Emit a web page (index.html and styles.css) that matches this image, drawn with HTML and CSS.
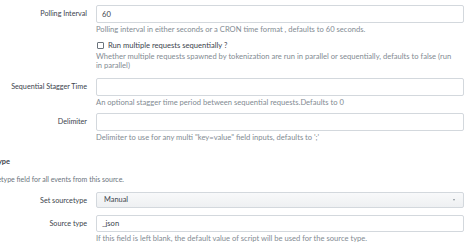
FILE: index.html
```
<!DOCTYPE html>
<html>
<head>
<meta charset="utf-8">
<link rel="stylesheet" href="styles.css">
</head>
<body>
<div class="form">
  <div class="row r-poll">
    <div class="label">Polling Interval</div>
    <div class="ctrl">
      <div class="input">60</div>
      <div class="help">Polling interval in either seconds or a CRON time format , defaults to 60 seconds.</div>
    </div>
  </div>
  <div class="row r-check">
    <div class="label"></div>
    <div class="ctrl">
      <div class="check"><span class="box"></span><span class="check-label">Run multiple requests sequentially ?</span></div>
      <div class="help wrap">Whether multiple requests spawned by tokenization are run in parallel or sequentially, defaults to false (run<br>in parallel)</div>
    </div>
  </div>
  <div class="row r-seq">
    <div class="label">Sequential Stagger Time</div>
    <div class="ctrl">
      <div class="input"></div>
      <div class="help">An optional stagger time period between sequential requests.Defaults to 0</div>
    </div>
  </div>
  <div class="row r-delim">
    <div class="label">Delimiter</div>
    <div class="ctrl">
      <div class="input"></div>
      <div class="help">Delimiter to use for any multi "key=value" field inputs, defaults to ';'</div>
    </div>
  </div>
  <div class="section">
    <div class="section-title"><span>Source type</span></div>
    <div class="section-desc"><span>Set sourcetype field for all events from this source.</span></div>
  </div>
  <div class="row r-set">
    <div class="label">Set sourcetype</div>
    <div class="ctrl">
      <div class="select"><span>Manual</span><span class="caret"></span></div>
    </div>
  </div>
  <div class="row r-st">
    <div class="label">Source type</div>
    <div class="ctrl">
      <div class="input">_json</div>
      <div class="help">If this field is left blank, the default value of script will be used for the source type.</div>
    </div>
  </div>
</div>
</body>
</html>
```
FILE: styles.css
```
html, body {
  margin: 0;
  padding: 0;
  background: #ffffff;
}
body {
  font-family: Lato, "Open Sans", sans-serif;
  font-size: 7px;
  color: #3c444d;
  width: 474px;
  height: 248px;
  overflow: hidden;
}
.form {
  padding-top: 5px;
  display: flex;
  flex-direction: column;
}
.row {
  display: grid;
  grid-template-columns: 87px 368px;
  column-gap: 9px;
  align-items: start;
}
.label {
  text-align: right;
  font-size: 7.2px;
  line-height: 18px;
  color: #3c444d;
  white-space: nowrap;
}
.ctrl {
  display: flex;
  flex-direction: column;
}
.input {
  box-sizing: border-box;
  height: 18px;
  border: 1px solid #d3d8dd;
  border-radius: 2px;
  background: #fff;
  padding: 0 5px;
  line-height: 16px;
  font-size: 7.6px;
  color: #3c444d;
}
.help {
  font-size: 7.6px;
  line-height: 10px;
  color: #838b93;
  margin-top: 1px;
  white-space: nowrap;
}
.help.wrap {
  line-height: 9.5px;
  margin-top: 1.5px;
}
.r-check {
  margin-top: 6px;
}
.check {
  display: flex;
  align-items: center;
  gap: 4px;
  height: 10px;
}
.box {
  box-sizing: border-box;
  width: 7px;
  height: 7px;
  border: 1px solid #6b747d;
  border-radius: 1px;
  background: #fff;
  margin-left: 1px;
}
.check-label {
  font-size: 7.6px;
  color: #3c444d;
}
.r-seq {
  margin-top: 7px;
}
.r-delim {
  margin-top: 6px;
}
.section {
  margin-top: 15px;
  display: flex;
  flex-direction: column;
}
.section-title {
  display: flex;
  justify-content: flex-end;
  width: 10px;
  font-weight: bold;
  font-size: 7.4px;
  line-height: 10px;
  color: #3c444d;
  white-space: nowrap;
}
.section-desc {
  display: flex;
  justify-content: flex-end;
  width: 124px;
  margin-top: 7px;
  font-size: 7px;
  line-height: 10px;
  color: #6b747d;
  white-space: nowrap;
}
.r-set {
  margin-top: 8px;
}
.select {
  box-sizing: border-box;
  height: 16px;
  border: 1px solid #d3d8dd;
  border-radius: 2px;
  background: linear-gradient(#f8f9fa, #eef0f2);
  padding: 0 6px 0 7px;
  display: flex;
  align-items: center;
  justify-content: space-between;
  font-size: 7.4px;
  color: #3c444d;
}
.caret {
  width: 0;
  height: 0;
  border-left: 1.5px solid transparent;
  border-right: 1.5px solid transparent;
  border-top: 2px solid #8a929a;
  margin-right: 2px;
}
.r-st {
  margin-top: 5px;
}
.r-st .input {
  height: 17px;
  line-height: 15px;
}
```
